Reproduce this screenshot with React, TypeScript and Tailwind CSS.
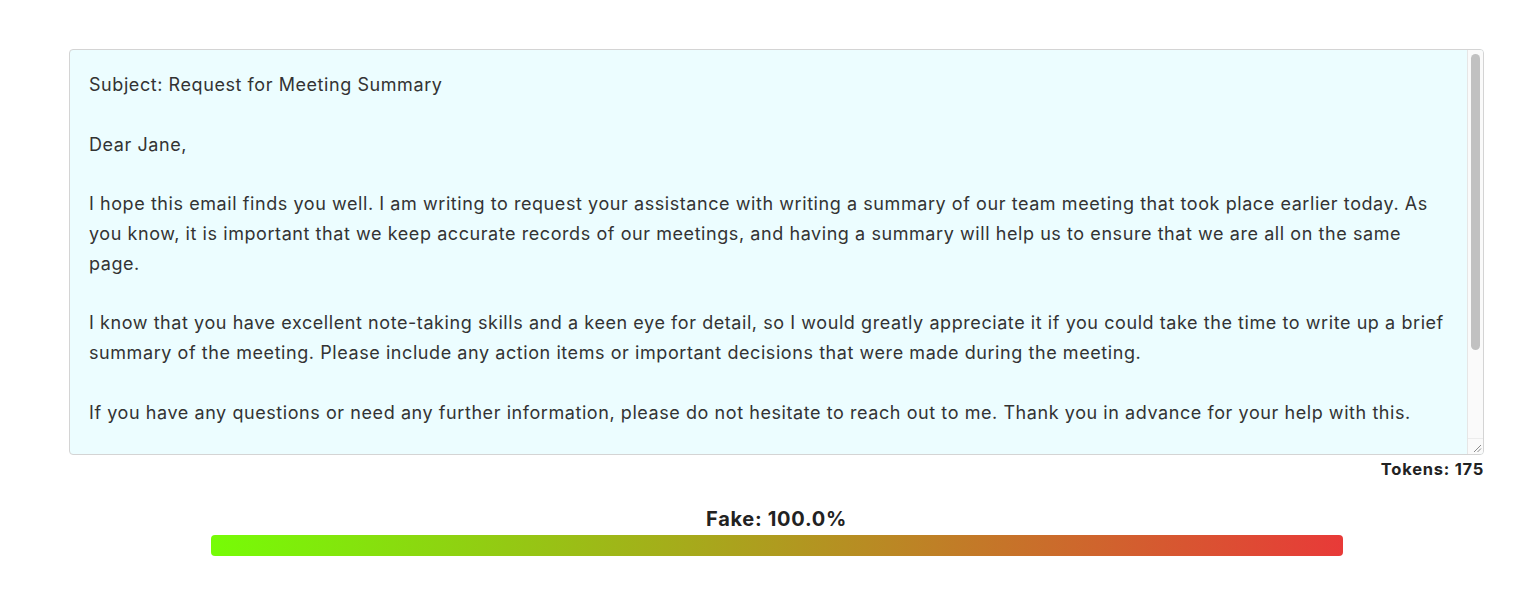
const lines = [
  "Subject: Request for Meeting Summary",
  "",
  "Dear Jane,",
  "",
  "I hope this email finds you well. I am writing to request your assistance with writing a summary of our team meeting that took place earlier today. As",
  "you know, it is important that we keep accurate records of our meetings, and having a summary will help us to ensure that we are all on the same",
  "page.",
  "",
  "I know that you have excellent note-taking skills and a keen eye for detail, so I would greatly appreciate it if you could take the time to write up a brief",
  "summary of the meeting. Please include any action items or important decisions that were made during the meeting.",
  "",
  "If you have any questions or need any further information, please do not hesitate to reach out to me. Thank you in advance for your help with this.",
];

const App = () => {
  return (
    <div className="w-[1536px] h-[596px] bg-white pl-[69px] pt-[49px] font-['Inter','Liberation_Sans',sans-serif]">
      <div className="w-[1415px]">
        <div className="flex h-[406px] rounded-[4px] border border-[#d4d4d4] bg-[#ecfdff] overflow-hidden">
          <div className="flex-1 overflow-hidden pl-[19px] pt-5 text-[18px] tracking-[0.57px] leading-[29.8px] text-[#333]">
            {lines.map((line, i) => (
              <div key={i} className="whitespace-nowrap h-[29.8px]">
                {line}
              </div>
            ))}
          </div>
          <div className="w-[16px] flex flex-col bg-[#fafafa] border-l border-[#e6e6e6]">
            <div className="flex-1 px-[3px] pt-[4px]">
              <div className="h-[296px] rounded-full bg-[#c1c1c1]" />
            </div>
            <div className="h-[16px] border-t border-[#ececec] flex items-end justify-end">
              <svg width="9" height="9" viewBox="0 0 9 9" className="mb-[1px] mr-[1px]">
                <path d="M1 8 L8 1 M4.5 8 L8 4.5" stroke="#8a8a8a" strokeWidth="1" />
              </svg>
            </div>
          </div>
        </div>
        <div className="flex justify-end pt-[3px] text-[16.5px] tracking-[0.75px] font-bold text-[#222] leading-[22px]">
          Tokens: 175
        </div>
        <div className="flex flex-col items-center pt-[26px]">
          <div className="text-[20px] tracking-[0.7px] font-bold text-[#222] leading-[26px]">Fake: 100.0%</div>
          <div className="mt-[3px] w-[80%] h-[21px] rounded-[4px] bg-[linear-gradient(to_right,#76fc06,#e83a38)]" />
        </div>
      </div>
    </div>
  );
};

export default App;
